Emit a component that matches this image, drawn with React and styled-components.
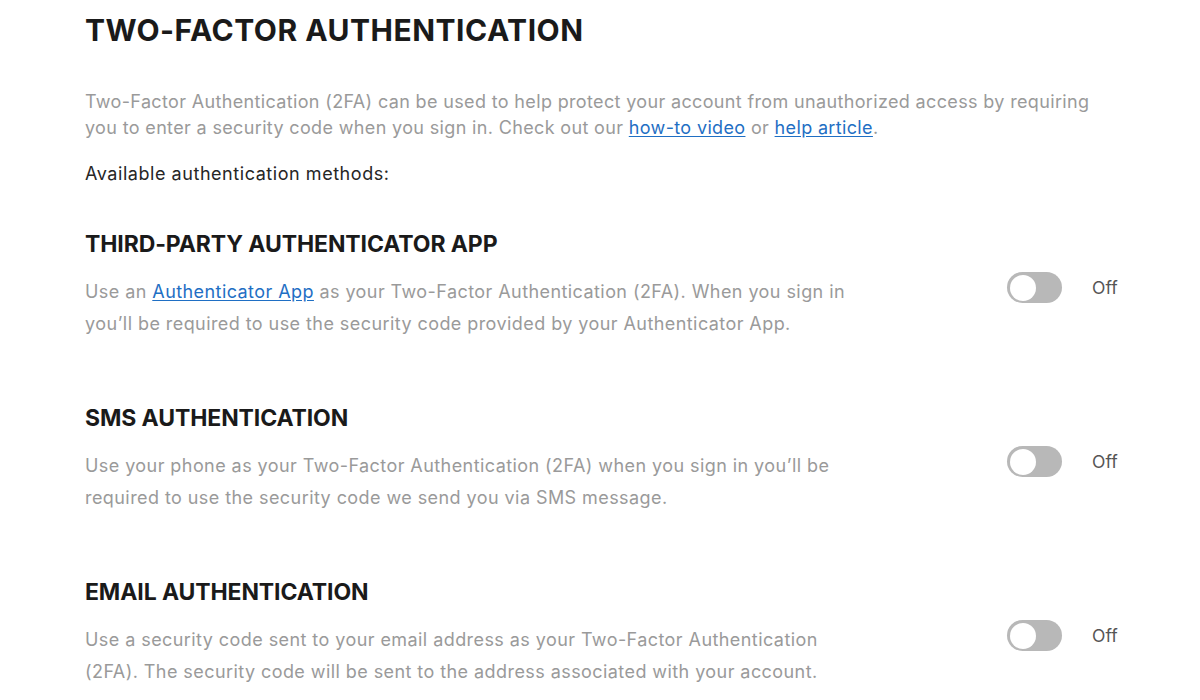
import React, { useState } from "react";
import styled, { createGlobalStyle } from "styled-components";

const GlobalStyle = createGlobalStyle`
  body {
    margin: 0;
    background: #ffffff;
    font-family: Inter, "Open Sans", sans-serif;
  }
`;

const Page = styled.div`
  padding: 8px 80px 0 85px;
  width: 1200px;
  box-sizing: border-box;
`;

const Title = styled.h1`
  margin: 0 0 37px;
  font-size: 30px;
  line-height: 44px;
  font-weight: 700;
  color: #1a1a1a;
  letter-spacing: 0.5px;
`;

const Intro = styled.p`
  margin: 0 0 20px;
  font-size: 18px;
  line-height: 26px;
  color: #9a9a9a;
  letter-spacing: 0.35px;
`;

const Link = styled.a`
  color: #1f6fc4;
  text-decoration: underline;
  text-underline-offset: 2px;
`;

const Lead = styled.p`
  margin: 0 0 41px;
  font-size: 18px;
  line-height: 26px;
  color: #262626;
  letter-spacing: 0.55px;
`;

const Method = styled.section`
  display: flex;
  align-items: flex-start;
  height: 174px;
`;

const Info = styled.div`
  flex: 1;
`;

const MethodTitle = styled.h2`
  margin: 0 0 16px;
  font-size: 23px;
  line-height: 32px;
  font-weight: 700;
  color: #1a1a1a;
  letter-spacing: -0.1px;
`;

const Desc = styled.p`
  margin: 0;
  font-size: 18px;
  line-height: 32px;
  color: #9a9a9a;
  letter-spacing: 0.43px;
`;

const Control = styled.div`
  display: flex;
  align-items: center;
  gap: 30px;
  margin-top: 44px;
`;

const Track = styled.button`
  position: relative;
  width: 55px;
  height: 31px;
  border: none;
  border-radius: 16px;
  padding: 0;
  background: ${(p) => (p.$on ? "#2a7ae2" : "#b8b8b8")};
  cursor: pointer;
`;

const Knob = styled.span`
  position: absolute;
  top: 2.5px;
  left: ${(p) => (p.$on ? "26px" : "2.5px")};
  width: 26px;
  height: 26px;
  border-radius: 50%;
  background: #ffffff;
`;

const State = styled.span`
  font-size: 17.5px;
  color: #555555;
  width: 28px;
`;

const Toggle = () => {
  const [on, setOn] = useState(false);
  return (
    <Control>
      <Track $on={on} onClick={() => setOn((v) => !v)}>
        <Knob $on={on} />
      </Track>
      <State>{on ? "On" : "Off"}</State>
    </Control>
  );
};

const App = () => (
  <Page>
    <GlobalStyle />
    <Title>TWO-FACTOR AUTHENTICATION</Title>
    <Intro>
      Two-Factor Authentication (2FA) can be used to help protect your account from unauthorized access by requiring
      <br />
      you to enter a security code when you sign in. Check out our <Link href="#">how-to video</Link> or{" "}
      <Link href="#">help article</Link>.
    </Intro>
    <Lead>Available authentication methods:</Lead>

    <Method>
      <Info>
        <MethodTitle>THIRD-PARTY AUTHENTICATOR APP</MethodTitle>
        <Desc>
          Use an <Link href="#">Authenticator App</Link> as your Two-Factor Authentication (2FA). When you sign in
          <br />
          you’ll be required to use the security code provided by your Authenticator App.
        </Desc>
      </Info>
      <Toggle />
    </Method>

    <Method>
      <Info>
        <MethodTitle>SMS AUTHENTICATION</MethodTitle>
        <Desc>
          Use your phone as your Two-Factor Authentication (2FA) when you sign in you’ll be
          <br />
          required to use the security code we send you via SMS message.
        </Desc>
      </Info>
      <Toggle />
    </Method>

    <Method>
      <Info>
        <MethodTitle>EMAIL AUTHENTICATION</MethodTitle>
        <Desc>
          Use a security code sent to your email address as your Two-Factor Authentication
          <br />
          (2FA). The security code will be sent to the address associated with your account.
        </Desc>
      </Info>
      <Toggle />
    </Method>
  </Page>
);

export default App;
